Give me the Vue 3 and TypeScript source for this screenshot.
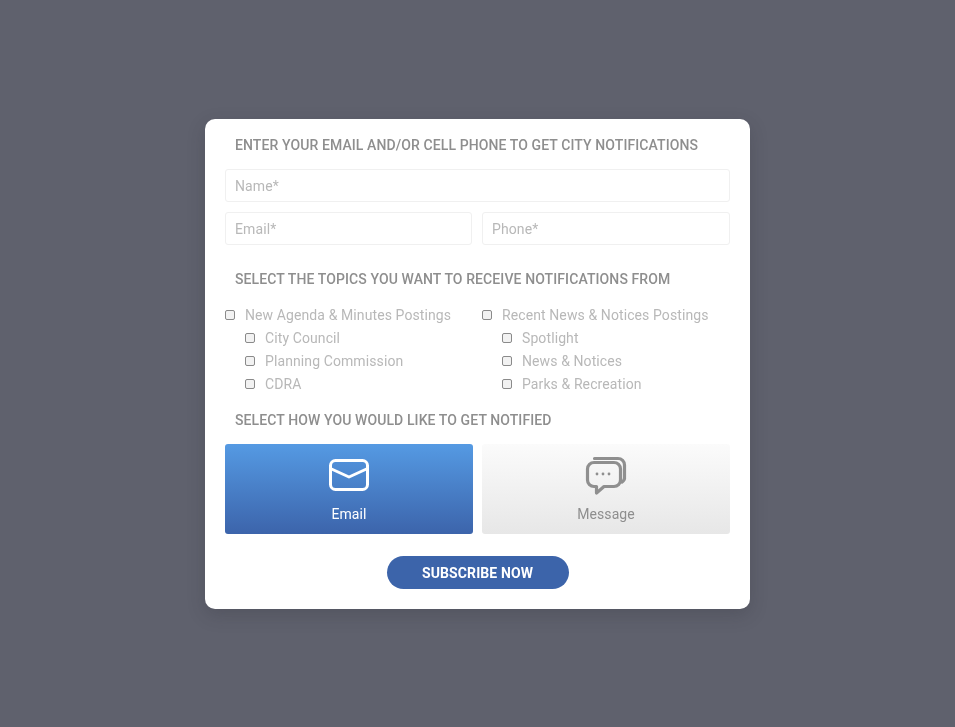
<script setup lang="ts">
interface Topic { label: string; children: string[] }
const topics: Topic[] = [
  { label: 'New Agenda & Minutes Postings', children: ['City Council', 'Planning Commission', 'CDRA'] },
  { label: 'Recent News & Notices Postings', children: ['Spotlight', 'News & Notices', 'Parks & Recreation'] },
]
</script>

<template>
  <main class="page">
    <form class="card" @submit.prevent>
      <h2 class="heading first">ENTER YOUR EMAIL AND/OR CELL PHONE TO GET CITY NOTIFICATIONS</h2>
      <input class="field" placeholder="Name*" />
      <div class="pair fields">
        <input class="field" placeholder="Email*" />
        <input class="field" placeholder="Phone*" />
      </div>

      <h2 class="heading second">SELECT THE TOPICS YOU WANT TO RECEIVE NOTIFICATIONS FROM</h2>
      <div class="pair topics">
        <ul v-for="t in topics" :key="t.label" class="topic">
          <li class="item"><span class="box"></span>{{ t.label }}</li>
          <li v-for="c in t.children" :key="c" class="item child"><span class="box"></span>{{ c }}</li>
        </ul>
      </div>

      <h2 class="heading third">SELECT HOW YOU WOULD LIKE TO GET NOTIFIED</h2>
      <div class="pair methods">
        <div class="method email">
          <svg class="icon" width="42" height="34" viewBox="0 0 42 34" fill="none" stroke="#fff" stroke-width="3" stroke-linejoin="round" stroke-linecap="round">
            <rect x="2.500" y="2.500" width="37" height="29" rx="5" />
            <path d="M3.500 11 L21 19 L38.500 11" />
          </svg>
          <span>Email</span>
        </div>
        <div class="method message">
          <svg class="icon" width="42" height="41" viewBox="0 0 42 41" fill="none" stroke="#8f8f8f" stroke-width="3.200" stroke-linejoin="round" stroke-linecap="round">
            <path d="M9.500 3.500 H33 A6.500 6.500 0 0 1 39.500 10 V22 A5 5 0 0 1 37 27" />
            <path d="M9 7.500 H29 A6.500 6.500 0 0 1 35.500 14 V25 A6.500 6.500 0 0 1 29 31.500 H19 L11.500 38 V31.500 H9 A6.500 6.500 0 0 1 2.500 25 V14 A6.500 6.500 0 0 1 9 7.500 Z" />
            <circle cx="12" cy="19" r="1.400" fill="#8f8f8f" stroke="none" />
            <circle cx="18" cy="19" r="1.400" fill="#8f8f8f" stroke="none" />
            <circle cx="24" cy="19" r="1.400" fill="#8f8f8f" stroke="none" />
          </svg>
          <span>Message</span>
        </div>
      </div>

      <button class="submit" type="submit">SUBSCRIBE NOW</button>
    </form>
  </main>
</template>

<style>
html, body { margin: 0; background: #5f616d; }
</style>

<style scoped>
.page {
  height: 727px;
  box-sizing: border-box;
  padding-top: 119px;
  background: #5f616d;
  font-family: Roboto, "Liberation Sans", sans-serif;
  letter-spacing: 0.1px;
}
.card {
  width: 545px;
  height: 490px;
  margin-left: 205px;
  box-sizing: border-box;
  padding: 0 20px;
  background: #fff;
  border-radius: 10px;
  box-shadow: 0 6px 18px rgba(40, 42, 52, 0.22);
  display: flex;
  flex-direction: column;
  will-change: opacity;
}
.heading {
  margin: 0;
  padding-left: 10px;
  font-size: 14px;
  line-height: 20px;
  font-weight: 500;
  color: #8e8e8e;
  white-space: nowrap;
}
.first { margin-top: 16px; margin-bottom: 14px; }
.second { margin-top: 24px; margin-bottom: 14px; }
.third { margin-top: 15px; margin-bottom: 14px; }
.field {
  display: block;
  width: 100%;
  min-width: 0;
  height: 33px;
  box-sizing: border-box;
  padding: 0 9px;
  border: 1px solid #f0f0f0;
  border-radius: 3px;
  outline: none;
  background: #fff;
  font: 400 14px Roboto, "Liberation Sans", sans-serif;
  letter-spacing: 0.1px;
}
.field::placeholder { color: #b8b8b8; opacity: 1; }
.pair {
  display: grid;
  grid-template-columns: 248px 248px;
  column-gap: 9px;
}
.fields { margin-top: 10px; grid-template-columns: 247px 248px; column-gap: 10px; }
.topics { column-gap: 9px; }
.topic { margin: 0; padding: 0; list-style: none; }
.item {
  display: flex;
  align-items: center;
  height: 23px;
  font-size: 14px;
  color: #b8b8b8;
  white-space: nowrap;
}
.child { padding-left: 20px; }
.box {
  width: 8px;
  height: 8px;
  margin-right: 10px;
  border: 1px solid #8a8a8a;
  border-radius: 2px;
  background: #f2f2f2;
  flex: none;
}
.method {
  height: 90px;
  border-radius: 3px;
  display: flex;
  flex-direction: column;
  align-items: center;
  font-size: 14px;
}
.icon { display: block; }
.method span { line-height: 16px; }
.email {
  padding-top: 14px;
  box-sizing: border-box;
  color: #fff;
  background: linear-gradient(180deg, #559ae3 0%, #3c64ab 100%);
}
.email span { margin-top: 14px; }
.message {
  padding-top: 11px;
  box-sizing: border-box;
  color: #8e8e8e;
  background: linear-gradient(180deg, #fbfbfb 0%, #e7e7e7 100%);
}
.message span { margin-top: 10px; }
.submit {
  width: 182px;
  height: 33px;
  margin: 22px auto 0;
  border: 0;
  padding: 0;
  border-radius: 17px;
  background: #3c64aa;
  color: #fff;
  font: 700 14px Roboto, "Liberation Sans", sans-serif;
  letter-spacing: 0.1px;
}
</style>
